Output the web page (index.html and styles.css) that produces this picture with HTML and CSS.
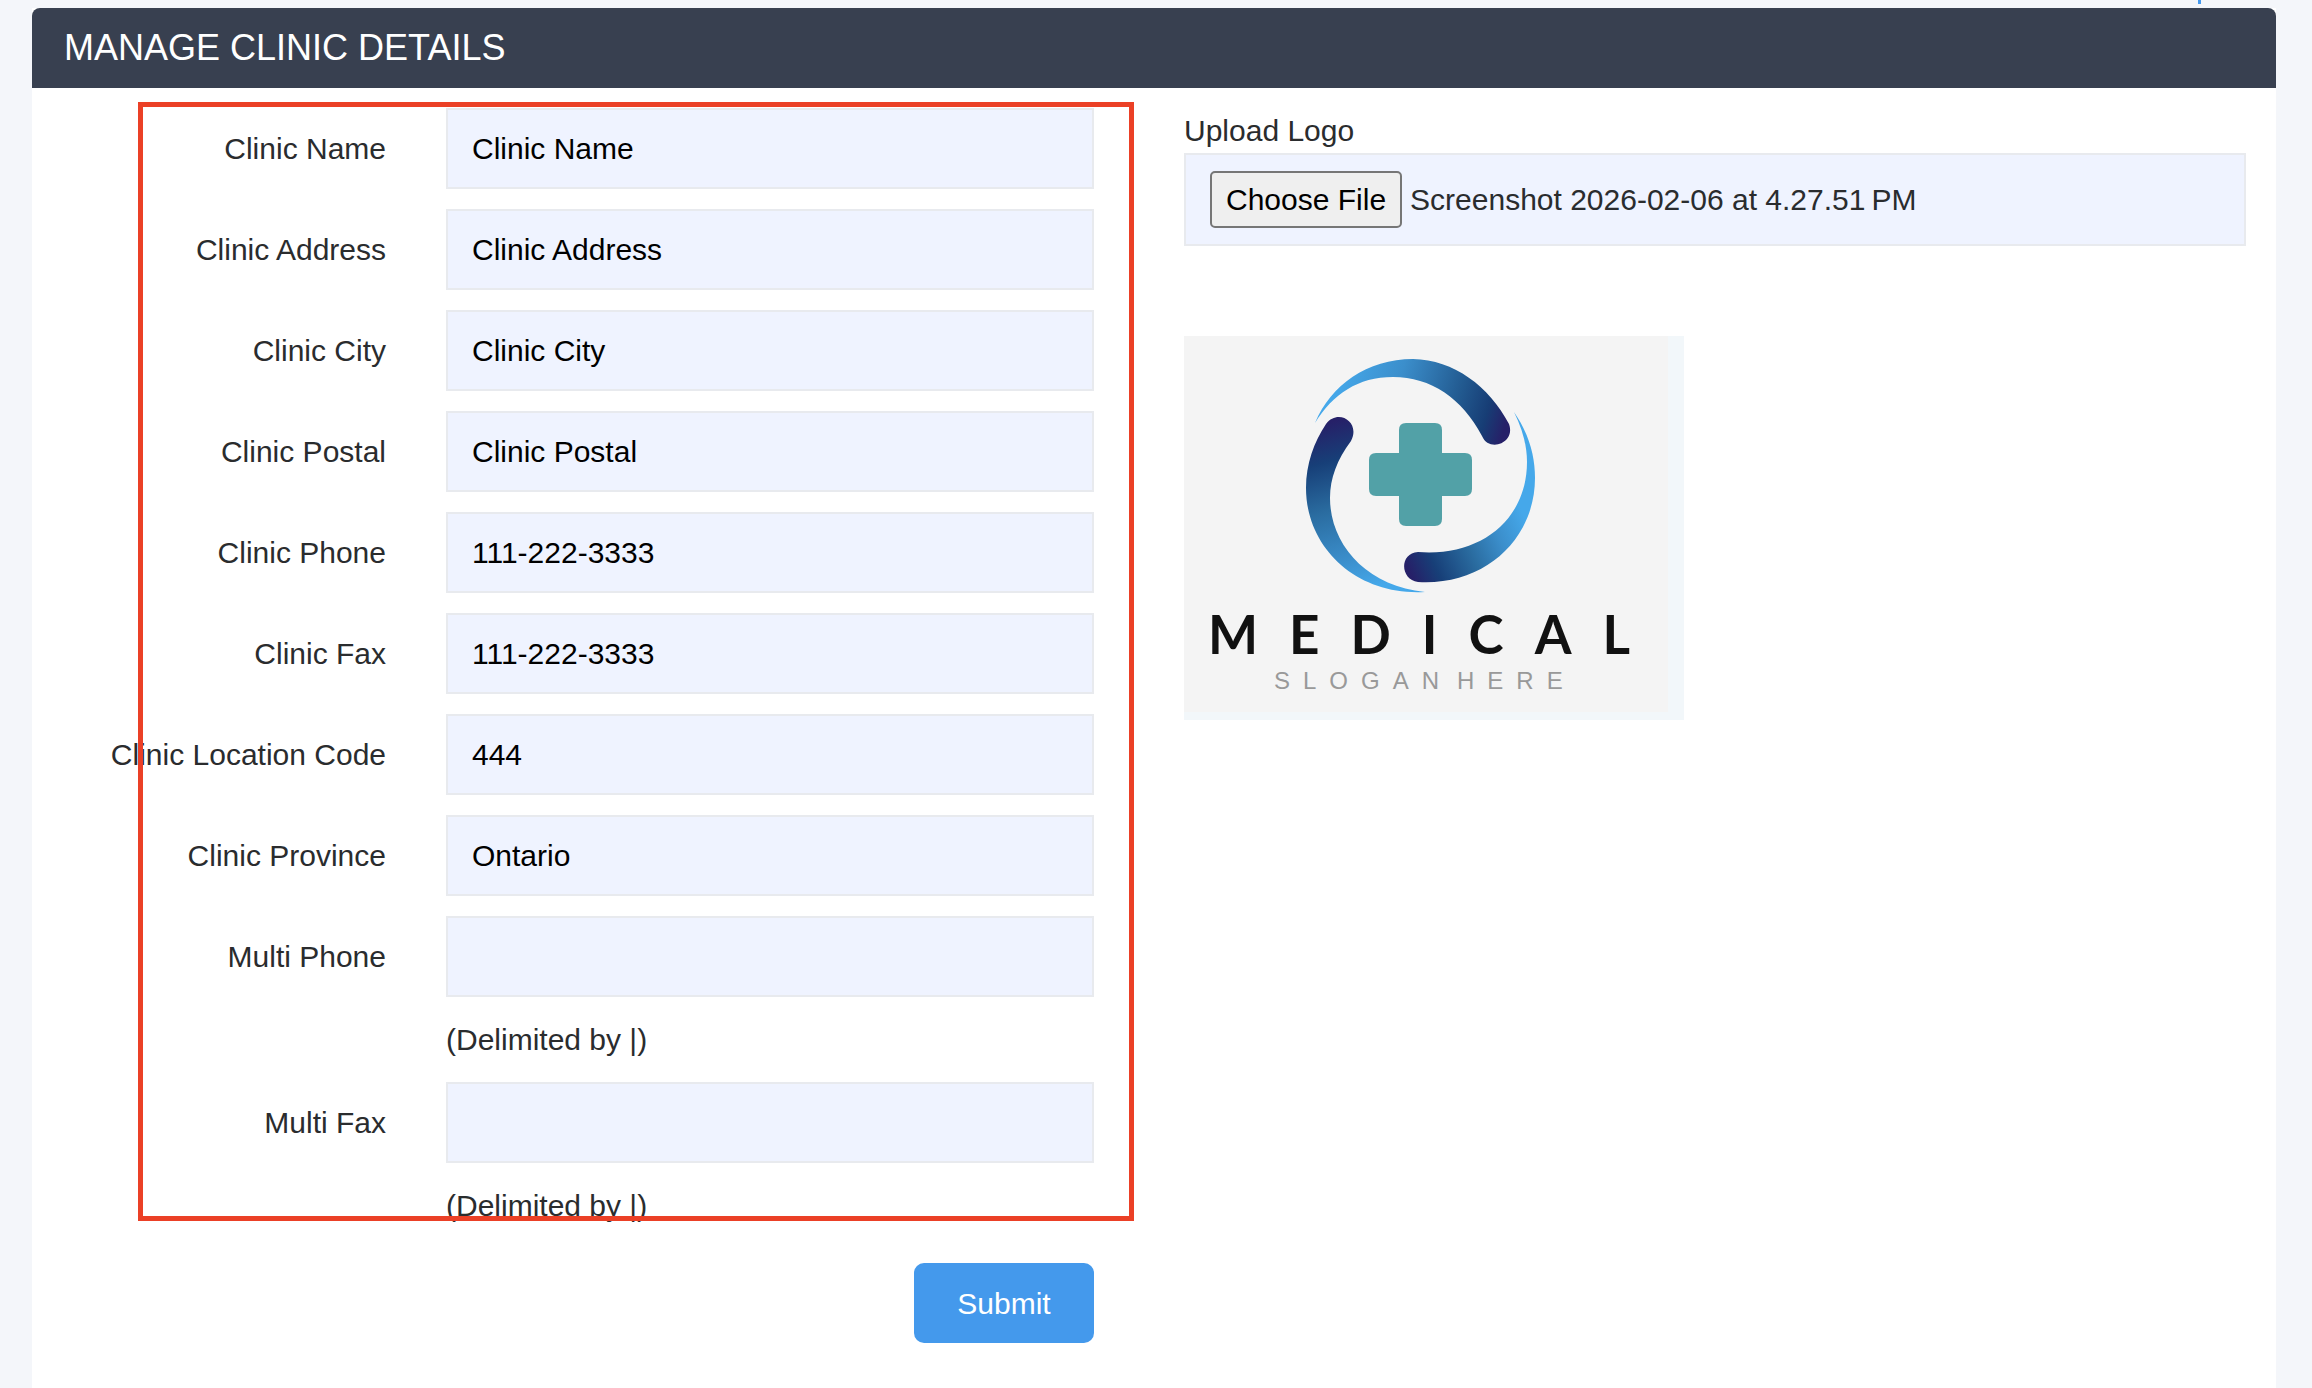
FILE: index.html
```html
<!DOCTYPE html>
<html lang="en">
<head>
  <meta charset="UTF-8">
  <title>Manage Clinic Details</title>
  <link rel="stylesheet" href="styles.css">
</head>
<body>
  <div class="topbar"><span class="topbar-mark"></span></div>
  <div class="panel">
    <h1 class="panel-title">MANAGE CLINIC DETAILS</h1>
    <form class="panel-body">
      <div class="details">
        <div class="fields">
          <div class="field">
            <label for="clinic-name">Clinic Name</label>
            <input type="text" id="clinic-name" value="Clinic Name">
          </div>
          <div class="field">
            <label for="clinic-address">Clinic Address</label>
            <input type="text" id="clinic-address" value="Clinic Address">
          </div>
          <div class="field">
            <label for="clinic-city">Clinic City</label>
            <input type="text" id="clinic-city" value="Clinic City">
          </div>
          <div class="field">
            <label for="clinic-postal">Clinic Postal</label>
            <input type="text" id="clinic-postal" value="Clinic Postal">
          </div>
          <div class="field">
            <label for="clinic-phone">Clinic Phone</label>
            <input type="text" id="clinic-phone" value="111-222-3333">
          </div>
          <div class="field">
            <label for="clinic-fax">Clinic Fax</label>
            <input type="text" id="clinic-fax" value="111-222-3333">
          </div>
          <div class="field">
            <label for="clinic-location">Clinic Location Code</label>
            <input type="text" id="clinic-location" value="444">
          </div>
          <div class="field">
            <label for="clinic-province">Clinic Province</label>
            <input type="text" id="clinic-province" value="Ontario">
          </div>
          <div class="field">
            <label for="multi-phone">Multi Phone</label>
            <input type="text" id="multi-phone">
          </div>
          <p class="hint">(Delimited by |)</p>
          <div class="field">
            <label for="multi-fax">Multi Fax</label>
            <input type="text" id="multi-fax">
          </div>
          <p class="hint">(Delimited by |)</p>
          <div class="highlight"></div>
        </div>
        <button type="submit" class="submit">Submit</button>
      </div>
      <div class="upload">
        <label for="logo-file">Upload Logo</label>
        <input type="file" id="logo-file" class="file">
        <svg class="logo" viewBox="0 0 500 384" role="img" aria-label="Medical logo">
          <defs>
            <linearGradient id="arc-top" gradientUnits="userSpaceOnUse" x1="150" y1="50" x2="318" y2="100">
              <stop offset="0" stop-color="#45a8ea"/>
              <stop offset="0.35" stop-color="#3b8ecb"/>
              <stop offset="0.7" stop-color="#225a90"/>
              <stop offset="0.88" stop-color="#173d75"/>
              <stop offset="1" stop-color="#262068"/>
            </linearGradient>
            <linearGradient id="arc-left" gradientUnits="userSpaceOnUse" x1="150" y1="85" x2="195" y2="250">
              <stop offset="0" stop-color="#262068"/>
              <stop offset="0.22" stop-color="#173f78"/>
              <stop offset="0.5" stop-color="#2a6ca0"/>
              <stop offset="0.8" stop-color="#3b8ecb"/>
              <stop offset="1" stop-color="#45a8ea"/>
            </linearGradient>
            <linearGradient id="arc-right" gradientUnits="userSpaceOnUse" x1="224" y1="232" x2="340" y2="180">
              <stop offset="0" stop-color="#262068"/>
              <stop offset="0.2" stop-color="#173f78"/>
              <stop offset="0.5" stop-color="#2a6ca0"/>
              <stop offset="0.75" stop-color="#3b8ecb"/>
              <stop offset="1" stop-color="#45a8ea"/>
            </linearGradient>
          </defs>
          <rect width="500" height="384" fill="#f2f7fa"/>
          <rect width="484" height="376" fill="#f4f4f4"/>
          <path fill="url(#arc-top)" d="M131 87C147 49 183 23 229 23C270 24 305 50 325 88C332 107 305 117 298 100C278 62 247 41 209 41C174 41 149 58 131 87Z"/>
          <path fill="url(#arc-left)" d="M241 256C173 260 122 212 122 152C122 128 130 106 142 88C154 72 177 86 167 105C153 124 146 142 146 162C146 208 182 250 241 256Z"/>
          <path fill="url(#arc-right)" d="M330 76C345 98 351 120 351 142C351 202 302 250 234 246C216 244 215 217 234 216C296 221 343 184 343 126C343 109 338 92 330 76Z"/>
          <path fill="#52a1a7" d="M222 87H251Q258 87 258 94V117H281Q288 117 288 124V153Q288 160 281 160H258V183Q258 190 251 190H222Q215 190 215 183V160H192Q185 160 185 153V124Q185 117 192 117H215V94Q215 87 222 87Z"/>
          <text class="logo-name" x="24" y="318">MEDICAL</text>
          <text class="logo-slogan" x="90" y="353">SLOGAN<tspan dx="5">HERE</tspan></text>
        </svg>
      </div>
    </form>
  </div>
  <script>
    const files = new DataTransfer();
    files.items.add(new File([''], 'Screenshot 2026-02-06 at 4.27.51\u202fPM'));
    document.getElementById('logo-file').files = files.files;

    document.querySelector('form').addEventListener('submit', (e) => {
      e.preventDefault();
    });
  </script>
</body>
</html>
```
FILE: styles.css
```css
* {
  box-sizing: border-box;
  margin: 0;
  padding: 0;
}
body {
  background: #f4f6fa;
  color: #2a2c2e;
  font-family: "Liberation Sans", Arial, sans-serif;
  font-size: 30px;
  line-height: 45px;
  padding: 0 36px 0 32px;
}
.topbar {
  display: flex;
  justify-content: flex-end;
  height: 8px;
  padding-right: 75px;
}
.topbar-mark {
  width: 3px;
  height: 4px;
  background: #4499ee;
}
.panel {
  background: white;
  min-height: calc(100vh - 8px);
}
.panel-title {
  background: #384050;
  color: white;
  font-size: 36px;
  font-weight: normal;
  line-height: 80px;
  padding: 0 32px;
  border-radius: 8px 8px 0 0;
}
.panel-body {
  display: grid;
  grid-template-columns: 1fr 1fr;
  gap: 90px;
  padding: 20px 30px 40px 0;
}
.details {
  display: flex;
  flex-direction: column;
  gap: 35px;
}
.fields {
  position: relative;
  display: flex;
  flex-direction: column;
  gap: 20px;
}
.field {
  display: flex;
  align-items: center;
  gap: 60px;
}
.field label {
  width: calc(100% / 3);
  text-align: right;
}
.field input,
.file {
  background: #eff3ff;
  border: 2px solid #e8eaee;
  padding: 0 24px;
  font: inherit;
}
.field input {
  flex: 1;
  min-width: 0;
  height: 81px;
  color: black;
}
.hint {
  margin-left: calc(100% / 3 + 60px);
}
/* frame drawn over the clinic fields */
.highlight {
  position: absolute;
  top: -6px;
  right: -40px;
  bottom: 7px;
  left: 106px;
  border: 5px solid #eb4026;
  pointer-events: none;
}
.submit {
  align-self: flex-end;
  width: 180px;
  height: 80px;
  background: #4499ec;
  color: white;
  border: none;
  border-radius: 10px;
  font: inherit;
  cursor: pointer;
}
.upload {
  display: flex;
  flex-direction: column;
  align-items: flex-start;
}
.file {
  width: 100%;
  padding: 16px 24px;
  color: inherit;
}
.file::file-selector-button {
  height: 57px;
  margin-right: 8px;
  padding: 0 14px;
  background: #efefef;
  color: black;
  border: 2px solid #767676;
  border-radius: 5px;
  font: inherit;
}
.logo {
  width: 500px;
  max-width: 100%;
  margin-top: 90px;
}
.logo-name {
  fill: #111;
  font-family: Lato, sans-serif;
  font-size: 53px;
  font-weight: bold;
  letter-spacing: 31px;
}
.logo-slogan {
  fill: #999;
  font-size: 24px;
  letter-spacing: 13px;
}
```
